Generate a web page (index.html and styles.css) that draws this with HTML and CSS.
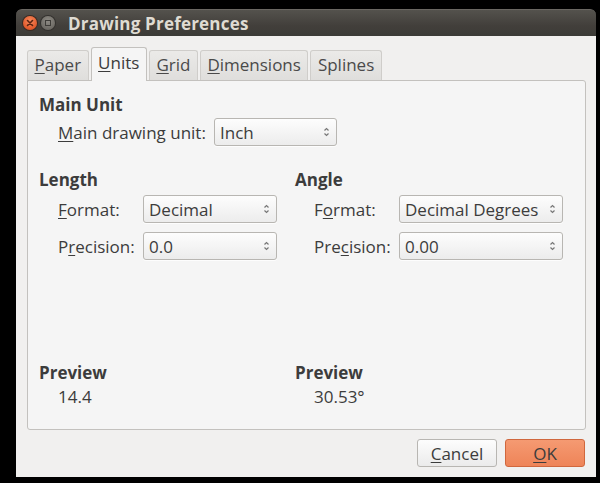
FILE: index.html
```html
<!DOCTYPE html>
<html>
<head>
<meta charset="utf-8">
<link rel="stylesheet" href="styles.css">
</head>
<body>
<div class="window">
  <div class="titlebar">
    <span class="wbtn close">
      <svg width="14" height="14" viewBox="0 0 14 14"><path d="M4.5 4.5 L9.5 9.5 M9.5 4.5 L4.5 9.5" stroke="#5a2412" stroke-width="1.6" stroke-linecap="round"/></svg>
    </span>
    <span class="wbtn min">
      <svg width="14" height="14" viewBox="0 0 14 14"><rect x="4.5" y="4.5" width="5" height="5" fill="none" stroke="#3e3c38" stroke-width="1"/></svg>
    </span>
    <span class="title">Drawing Preferences</span>
  </div>
  <div class="body">
    <div class="tabs">
      <div class="tab"><u>P</u>aper</div>
      <div class="tab active"><u>U</u>nits</div>
      <div class="tab"><u>G</u>rid</div>
      <div class="tab"><u>D</u>imensions</div>
      <div class="tab">Splines</div>
    </div>
    <div class="panel">
      <div class="heading">Main Unit</div>
      <div class="row main-row">
        <span class="label"><u>M</u>ain drawing unit:</span>
        <div class="combo w-main"><span>Inch</span><svg class="spin" width="7" height="12" viewBox="0 0 7 12"><path d="M1.5 4.5 L3.5 2.5 L5.5 4.5 M1.5 7.5 L3.5 9.5 L5.5 7.5" fill="none" stroke="#777" stroke-width="1.2"/></svg></div>
      </div>
      <div class="cols">
        <div class="col">
          <div class="heading">Length</div>
          <div class="grid g-len">
            <span class="label"><u>F</u>ormat:</span>
            <div class="combo"><span>Decimal</span><svg class="spin" width="7" height="12" viewBox="0 0 7 12"><path d="M1.5 4.5 L3.5 2.5 L5.5 4.5 M1.5 7.5 L3.5 9.5 L5.5 7.5" fill="none" stroke="#777" stroke-width="1.2"/></svg></div>
            <span class="label">P<u>r</u>ecision:</span>
            <div class="combo"><span>0.0</span><svg class="spin" width="7" height="12" viewBox="0 0 7 12"><path d="M1.5 4.5 L3.5 2.5 L5.5 4.5 M1.5 7.5 L3.5 9.5 L5.5 7.5" fill="none" stroke="#777" stroke-width="1.2"/></svg></div>
          </div>
        </div>
        <div class="col">
          <div class="heading">Angle</div>
          <div class="grid g-ang">
            <span class="label">F<u>o</u>rmat:</span>
            <div class="combo"><span>Decimal Degrees</span><svg class="spin" width="7" height="12" viewBox="0 0 7 12"><path d="M1.5 4.5 L3.5 2.5 L5.5 4.5 M1.5 7.5 L3.5 9.5 L5.5 7.5" fill="none" stroke="#777" stroke-width="1.2"/></svg></div>
            <span class="label">Pre<u>c</u>ision:</span>
            <div class="combo"><span>0.00</span><svg class="spin" width="7" height="12" viewBox="0 0 7 12"><path d="M1.5 4.5 L3.5 2.5 L5.5 4.5 M1.5 7.5 L3.5 9.5 L5.5 7.5" fill="none" stroke="#777" stroke-width="1.2"/></svg></div>
          </div>
        </div>
      </div>
      <div class="cols previews">
        <div class="col">
          <div class="heading">Preview</div>
          <div class="value">14.4</div>
        </div>
        <div class="col">
          <div class="heading">Preview</div>
          <div class="value">30.53°</div>
        </div>
      </div>
    </div>
    <div class="actions">
      <button class="btn"><u>C</u>ancel</button>
      <button class="btn ok"><u>O</u>K</button>
    </div>
  </div>
</div>
</body>
</html>
```

FILE: styles.css
```css
html, body {
  margin: 0;
  padding: 0;
  background: #000;
}
body {
  width: 600px;
  height: 483px;
  overflow: hidden;
  font-family: "Open Sans", "Noto Sans", sans-serif;
  font-size: 17px;
  color: #3c3c3c;
}
u {
  text-decoration: underline;
  text-underline-offset: 2px;
  text-decoration-thickness: 1px;
}
.window {
  margin: 9px 0 0 16px;
  width: 580px;
  height: 468px;
  display: flex;
  flex-direction: column;
}
.titlebar {
  height: 27px;
  flex: none;
  border-radius: 6px 6px 0 0;
  background: linear-gradient(#54524d, #423f3b 60%, #3c3b37);
  display: flex;
  align-items: center;
  padding-left: 7px;
  border-top: 1px solid #6a6762;
  box-sizing: border-box;
}
.wbtn {
  width: 14px;
  height: 14px;
  border-radius: 50%;
  display: flex;
  align-items: center;
  justify-content: center;
  flex: none;
}
.close {
  background: radial-gradient(circle at 50% 35%, #f7895c, #e0582a 70%, #b7431c);
  box-shadow: 0 0 0 1px #3a2a22;
}
.min {
  margin-left: 4px;
  background: radial-gradient(circle at 50% 35%, #8d8a84, #6e6b65 70%, #5e5b56);
  box-shadow: 0 0 0 1px #33312e;
}
.title {
  margin-left: 13px;
  font-weight: 700;
  font-size: 17px;
  color: #dfdbd2;
  letter-spacing: 0.2px;
}
.body {
  flex: 1;
  background: #f1f0ef;
  padding: 11px 10px 0 11px;
  display: flex;
  flex-direction: column;
}
.tabs {
  display: flex;
  align-items: flex-end;
  height: 33px;
  gap: 2px;
}
.tab {
  height: 30px;
  box-sizing: border-box;
  padding: 0 6.5px 2px;
  display: flex;
  align-items: center;
  border: 1px solid #cfcdca;
  border-bottom: none;
  border-radius: 3px 3px 0 0;
  background: linear-gradient(#ebeae8, #dfdedc);
  color: #4a4a4a;
}
.tab.active {
  height: 34px;
  padding-bottom: 4px;
  background: #f5f5f5;
  color: #3c3c3c;
  margin-bottom: -1px;
  position: relative;
  z-index: 1;
  border-color: #c3c1be;
}
.panel {
  height: 350px;
  box-sizing: border-box;
  border: 1px solid #c3c1be;
  border-radius: 0 3px 3px 3px;
  background: #f5f5f5;
  padding: 14px 0 22px 11px;
  display: flex;
  flex-direction: column;
}
.heading {
  font-weight: 700;
  line-height: 20px;
  height: 20px;
  color: #3c3c3c;
}
.label {
  color: #3c3c3c;
}
.row {
  display: flex;
  align-items: center;
}
.main-row {
  margin-top: 3px;
  padding-left: 19px;
}
.main-row .label {
  width: 156px;
}
.combo {
  height: 28px;
  box-sizing: border-box;
  border: 1px solid #b8b6b2;
  border-radius: 3px;
  background: linear-gradient(#fdfdfd, #ececec);
  display: flex;
  align-items: center;
  justify-content: space-between;
  padding: 0 6px 0 5px;
  color: #3c3c3c;
  box-shadow: 0 1px 0 rgba(255,255,255,0.8);
}
.w-main {
  width: 123px;
}
.spin {
  flex: none;
}
.cols {
  display: grid;
  grid-template-columns: 256px 1fr;
}
.cols:not(.previews) {
  margin-top: 24px;
}
.grid {
  display: grid;
  margin-top: 5px;
  padding-left: 19px;
  row-gap: 9px;
  align-items: center;
}
.g-len {
  grid-template-columns: 85px 134px;
}
.g-ang {
  grid-template-columns: 85px 164px;
}
.previews {
  margin-top: auto;
}
.value {
  margin-top: 4px;
  padding-left: 19px;
  line-height: 20px;
  color: #3c3c3c;
}
.actions {
  display: flex;
  justify-content: flex-end;
  gap: 8px;
  margin-top: 9px;
  padding-right: 1px;
}
.btn {
  width: 80px;
  height: 28px;
  font-family: inherit;
  font-size: 17px;
  color: #3c3c3c;
  border: 1px solid #b8b6b2;
  border-radius: 3px;
  background: linear-gradient(#fdfdfd, #ebebeb);
  padding: 0;
}
.btn.ok {
  background: linear-gradient(#f59a72, #ee8458);
  border-color: #d0673d;
  color: #3c3c3c;
}
```
